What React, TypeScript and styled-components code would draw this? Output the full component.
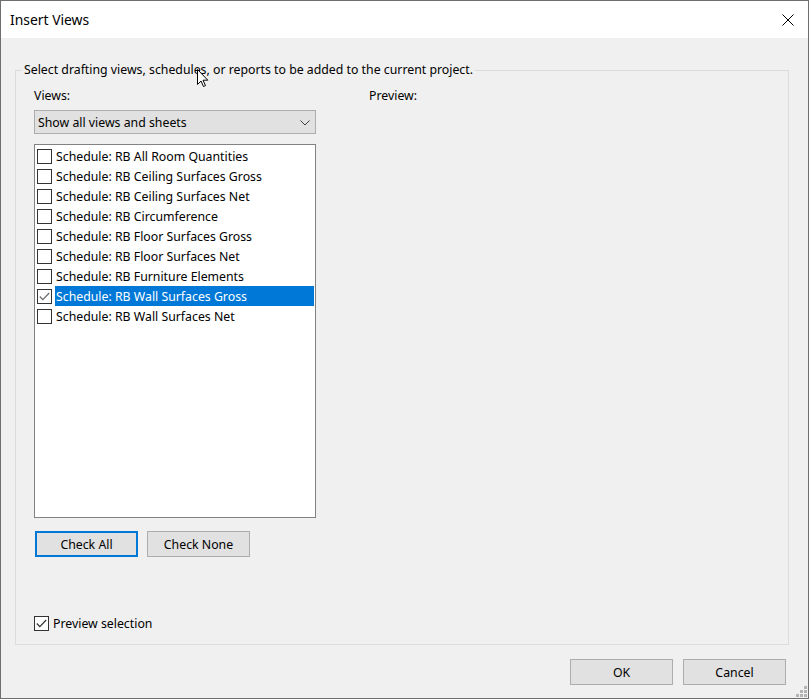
import React from "react";
import styled, { createGlobalStyle } from "styled-components";

const FONT = `"Noto Sans", "Liberation Sans", sans-serif`;

const Global = createGlobalStyle`
  html, body { margin: 0; padding: 0; background: #ffffff; }
  body { font-family: ${FONT}; }
  * { box-sizing: border-box; }
`;

const Window = styled.div`
  position: relative;
  width: 809px;
  height: 699px;
  border: 1px solid #6e6e6e;
  background: #f0f0f0;
  display: flex;
  flex-direction: column;
  font-family: ${FONT};
  font-size: 12.3px;
  color: #000;
`;

const TitleBar = styled.div`
  height: 37px;
  background: #ffffff;
  display: flex;
  align-items: center;
  justify-content: space-between;
  padding: 0 14px 0 9px;
`;

const Title = styled.div`
  font-size: 13.9px;
  line-height: 20px;
  padding-top: 1px;
  color: #000;
`;

const CloseButton = styled.div`
  width: 12px;
  height: 12px;
  display: flex;
`;

const Body = styled.div`
  flex: 1;
  display: flex;
  flex-direction: column;
`;

const GroupBox = styled.fieldset`
  margin: 24px 19px 0 14px;
  padding: 0;
  border: 1px solid #dcdcdc;
  min-width: 0;
`;

const Legend = styled.legend`
  margin-left: 6px;
  padding: 0 2px;
  font-size: 12.3px;
  line-height: 16px;
`;

const Content = styled.div`
  height: 566px;
  padding: 9px 0 13px 18px;
  display: flex;
`;

const LeftColumn = styled.div`
  width: 282px;
  display: flex;
  flex-direction: column;
`;

const RightColumn = styled.div`
  margin-left: 53px;
  display: flex;
  flex-direction: column;
`;

const FieldLabel = styled.div`
  height: 16px;
  line-height: 16px;
  padding-top: 1px;
  margin-bottom: 7px;
`;

const Select = styled.div`
  height: 24px;
  border: 1px solid #adadad;
  background: #e1e1e1;
  display: flex;
  align-items: center;
  justify-content: space-between;
  padding: 1px 5px 0 3px;
  margin-bottom: 10px;
`;

const ListBox = styled.div`
  height: 374px;
  border: 1px solid #828282;
  background: #ffffff;
  padding: 1px 0;
  margin-bottom: 13px;
  display: flex;
  flex-direction: column;
`;

const Row = styled.div`
  height: 20px;
  display: flex;
  align-items: center;
  padding-left: 2px;
  padding-right: 1px;
`;

const Box = styled.div`
  width: 15px;
  height: 15px;
  flex: none;
  border: 1px solid #333333;
  background: #ffffff;
  display: flex;
  align-items: center;
  justify-content: center;
`;

const RowText = styled.div<{ $selected?: boolean }>`
  flex: 1;
  height: 20px;
  line-height: 20px;
  margin-left: 3px;
  padding: 1px 0 0 1px;
  white-space: nowrap;
  background: ${(p) => (p.$selected ? "#0078d7" : "transparent")};
  color: ${(p) => (p.$selected ? "#ffffff" : "#000000")};
`;

const ButtonRow = styled.div`
  display: flex;
  gap: 9px;
  margin-left: 1px;
`;

const Button = styled.div<{ $default?: boolean }>`
  width: 103px;
  height: 26px;
  background: #e1e1e1;
  border: ${(p) => (p.$default ? "2px solid #0078d7" : "1px solid #adadad")};
  display: flex;
  align-items: center;
  justify-content: center;
  line-height: 16px;
  padding-top: 2px;
`;

const Spacer = styled.div`
  flex: 1;
`;

const CheckRow = styled.div`
  height: 16px;
  display: flex;
  align-items: center;
  gap: 4px;
`;

const CheckLabel = styled.span`
  padding-top: 1px;
`;

const Footer = styled.div`
  display: flex;
  justify-content: flex-end;
  gap: 10px;
  padding: 14px 22px 0 0;
`;

const Grip = styled.svg`
  position: absolute;
  right: 1px;
  bottom: 1px;
`;

const Cursor = styled.svg`
  position: absolute;
  left: 195px;
  top: 67px;
`;

const Check = ({ color }: { color: string }) => (
  <svg width="11" height="9" viewBox="0 0 11 9">
    <polyline points="0.8,4.5 3.8,7.6 10.2,1" fill="none" stroke={color} strokeWidth="1.2" />
  </svg>
);

const items = [
  "Schedule: RB All Room Quantities",
  "Schedule: RB Ceiling Surfaces Gross",
  "Schedule: RB Ceiling Surfaces Net",
  "Schedule: RB Circumference",
  "Schedule: RB Floor Surfaces Gross",
  "Schedule: RB Floor Surfaces Net",
  "Schedule: RB Furniture Elements",
  "Schedule: RB Wall Surfaces Gross",
  "Schedule: RB Wall Surfaces Net",
];

export default function App() {
  return (
    <>
      <Global />
      <Window>
        <TitleBar>
          <Title>Insert Views</Title>
          <CloseButton>
            <svg width="12" height="12" viewBox="0 0 12 12">
              <line x1="0.5" y1="0.5" x2="11.5" y2="11.5" stroke="#000" strokeWidth="1" />
              <line x1="11.5" y1="0.5" x2="0.5" y2="11.5" stroke="#000" strokeWidth="1" />
            </svg>
          </CloseButton>
        </TitleBar>
        <Body>
          <GroupBox>
            <Legend>Select drafting views, schedules, or reports to be added to the current project.</Legend>
            <Content>
              <LeftColumn>
                <FieldLabel>Views:</FieldLabel>
                <Select>
                  <span>Show all views and sheets</span>
                  <svg width="10" height="6" viewBox="0 0 10 6">
                    <polyline points="0.5,0.5 5,5 9.5,0.5" fill="none" stroke="#404040" strokeWidth="1" />
                  </svg>
                </Select>
                <ListBox>
                  {items.map((it, i) => {
                    const sel = i === 7;
                    return (
                      <Row key={it}>
                        <Box>{sel && <Check color="#6a6a6a" />}</Box>
                        <RowText $selected={sel}>{it}</RowText>
                      </Row>
                    );
                  })}
                </ListBox>
                <ButtonRow>
                  <Button $default>Check All</Button>
                  <Button>Check None</Button>
                </ButtonRow>
                <Spacer />
                <CheckRow>
                  <Box>
                    <Check color="#333333" />
                  </Box>
                  <CheckLabel>Preview selection</CheckLabel>
                </CheckRow>
              </LeftColumn>
              <RightColumn>
                <FieldLabel>Preview:</FieldLabel>
              </RightColumn>
            </Content>
          </GroupBox>
          <Footer>
            <Button>OK</Button>
            <Button>Cancel</Button>
          </Footer>
        </Body>
        <Grip width="11" height="11" viewBox="0 0 11 11">
          {[
            [8, 0],
            [4, 4],
            [8, 4],
            [0, 8],
            [4, 8],
            [8, 8],
          ].map(([x, y]) => (
            <rect key={`${x}-${y}`} x={x} y={y} width="3" height="3" fill="#b4b4b4" />
          ))}
        </Grip>
        <Cursor width="13" height="20" viewBox="0 0 13 20">
          <path
            d="M1.5 1.5 L1.5 16.5 L5 13 L7.5 18.5 L9.5 17.6 L7 12.2 L11.8 12.2 Z"
            fill="#ffffff"
            stroke="#000000"
            strokeWidth="1"
            strokeLinejoin="miter"
          />
        </Cursor>
      </Window>
    </>
  );
}
